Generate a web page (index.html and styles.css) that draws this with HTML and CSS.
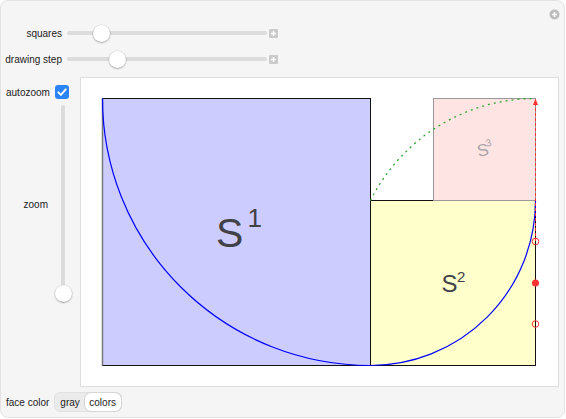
FILE: index.html
```html
<!DOCTYPE html>
<html>
<head>
<meta charset="utf-8">
<link rel="stylesheet" href="styles.css">
</head>
<body>
<div class="panel">
  <span class="corner-icon">
    <svg width="11" height="11" viewBox="0 0 11 11"><circle cx="5.5" cy="5.5" r="5" fill="#bcbcbc"/><path d="M5.5 3v5M3 5.5h5" stroke="#fff" stroke-width="1.6"/></svg>
  </span>

  <div class="slider-row">
    <span class="lbl">squares</span>
    <div class="track"><span class="thumb" style="left:26px"></span></div>
    <span class="plus"><svg width="9" height="9" viewBox="0 0 9 9"><rect width="9" height="9" rx="1" fill="#cbcbcb"/><path d="M4.5 2v5M2 4.5h5" stroke="#fff" stroke-width="1.3"/></svg></span>
  </div>
  <div class="slider-row second">
    <span class="lbl">drawing step</span>
    <div class="track"><span class="thumb" style="left:41.5px"></span></div>
    <span class="plus"><svg width="9" height="9" viewBox="0 0 9 9"><rect width="9" height="9" rx="1" fill="#cbcbcb"/><path d="M4.5 2v5M2 4.5h5" stroke="#fff" stroke-width="1.3"/></svg></span>
  </div>

  <div class="main">
    <div class="side">
      <div class="auto">
        <span>autozoom</span>
        <span class="check"><svg width="14" height="14" viewBox="0 0 14 14"><path d="M3.4 7.3l2.5 2.6 4.8-5.6" fill="none" stroke="#fff" stroke-width="1.9" stroke-linecap="round" stroke-linejoin="round"/></svg></span>
      </div>
      <div class="zoomrow">
        <span class="zoomlbl">zoom</span>
        <div class="vtrack"><span class="vthumb"></span></div>
      </div>
    </div>
    <div class="plot">
      <svg width="477" height="308" viewBox="81 78 477 308">
        <rect x="102.5" y="98.5" width="268" height="267" fill="#ccccff" stroke="#111" stroke-width="1"/>
        <line x1="102.5" y1="98.5" x2="102.5" y2="365.5" stroke="#777" stroke-width="1.5"/>
        <rect x="370.5" y="200.5" width="165" height="165" fill="#ffffcc" stroke="#111" stroke-width="1"/>
        <rect x="433.5" y="98.5" width="102" height="102" fill="#ffe4e4" stroke="#999" stroke-width="1"/>
        <path d="M370.5 200.5 A184.5 184.5 0 0 1 535.5 98.5" fill="none" stroke="#2fa52f" stroke-width="1.3" stroke-dasharray="2 4"/>
        <path d="M102.5 98.5 A268 267 0 0 0 370.5 365.5" fill="none" stroke="#0000ff" stroke-width="1.2"/>
        <path d="M370.5 365.5 A165 165 0 0 0 535.5 200.5" fill="none" stroke="#0000ff" stroke-width="1.2"/>
        <line x1="535.5" y1="241" x2="535.5" y2="104" stroke="#ff3333" stroke-width="1" stroke-dasharray="3 2"/>
        <path d="M535.5 98.5 L538 105 L533 105 Z" fill="#ff3333"/>
        <circle cx="535.5" cy="241.5" r="3.3" fill="none" stroke="#ff3333" stroke-width="1"/>
        <circle cx="535.5" cy="283" r="3.5" fill="#ff3333"/>
        <circle cx="535.5" cy="324" r="3.3" fill="none" stroke="#ff3333" stroke-width="1"/>
        <text class="lab" x="216" y="247" font-size="41">S</text>
        <text class="lab" x="247.5" y="227" font-size="26">1</text>
        <text class="lab" x="441.5" y="292" font-size="24">S</text>
        <text class="lab" x="457" y="282" font-size="15">2</text>
        <g transform="rotate(-12 485 149)">
          <text class="lab3" x="477" y="155.5" font-size="17">S</text>
          <text class="lab3" x="487" y="147" font-size="10">3</text>
        </g>
      </svg>
    </div>
  </div>

  <div class="face">
    <span class="facelbl">face color</span>
    <div class="seg">
      <span class="opt">gray</span>
      <span class="opt on">colors</span>
    </div>
  </div>
</div>
</body>
</html>
```
FILE: styles.css
```css
html, body {
  margin: 0;
  padding: 0;
  background: #ffffff;
}
body {
  font-family: "Liberation Sans", Arial, sans-serif;
  font-size: 10px;
  color: #222;
}
.panel {
  position: relative;
  width: 565px;
  height: 418px;
  box-sizing: border-box;
  border: 1px solid #e3e3e3;
  border-radius: 8px;
  background: #f5f5f5;
  padding-top: 20px;
}
.corner-icon {
  position: absolute;
  left: 548px;
  top: 8px;
  width: 11px;
  height: 11px;
}
.corner-icon svg { display: block; }
.slider-row {
  display: flex;
  align-items: center;
  height: 24px;
}
.slider-row.second { margin-top: 2px; }
.lbl {
  width: 61px;
  text-align: right;
  white-space: nowrap;
}
.track {
  position: relative;
  margin-left: 5px;
  width: 200px;
  height: 4px;
  border-radius: 2px;
  background: #dcdcdc;
}
.thumb {
  position: absolute;
  top: -6.5px;
  width: 17px;
  height: 17px;
  border-radius: 50%;
  background: #fff;
  box-shadow: 0 0 0 0.5px rgba(0,0,0,0.12), 0 1px 2px rgba(0,0,0,0.25);
}
.plus {
  margin-left: 2px;
  width: 9px;
  height: 9px;
}
.plus svg { display: block; }
.main {
  display: flex;
  margin-top: 6px;
  height: 310px;
}
.side {
  width: 79px;
  display: flex;
  flex-direction: column;
}
.auto {
  display: flex;
  align-items: center;
  gap: 5px;
  margin-top: 8px;
  padding-left: 5px;
  height: 14px;
}
.check {
  width: 14px;
  height: 14px;
  border-radius: 3px;
  background: #2a84f6;
}
.check svg { display: block; }
.zoomrow {
  display: flex;
  align-items: center;
  gap: 13px;
  margin-top: 6px;
  height: 198px;
}
.zoomlbl {
  width: 47px;
  text-align: right;
}
.vtrack {
  position: relative;
  width: 4px;
  height: 198px;
  border-radius: 2px;
  background: #dcdcdc;
}
.vthumb {
  position: absolute;
  left: -6.5px;
  top: 180px;
  width: 17px;
  height: 17px;
  border-radius: 50%;
  background: #fff;
  box-shadow: 0 0 0 0.5px rgba(0,0,0,0.12), 0 1px 2px rgba(0,0,0,0.25);
}
.plot {
  width: 479px;
  height: 310px;
  box-sizing: border-box;
  border: 1px solid #dddddd;
  background: #ffffff;
}
.plot svg { display: block; }
.lab {
  font-family: "Liberation Sans", Arial, sans-serif;
  fill: #414148;
}
.lab3 {
  font-family: "Liberation Sans", Arial, sans-serif;
  fill: #a9a3a6;
}
.face {
  display: flex;
  align-items: center;
  gap: 5px;
  margin-top: 5px;
  padding-left: 5px;
  height: 20px;
}
.seg {
  display: flex;
  align-items: stretch;
  height: 18px;
  border: 1px solid #e2e2e2;
  border-radius: 6px;
  background: #ebebeb;
}
.opt {
  display: flex;
  align-items: center;
  padding: 0 5px;
}
.opt.on {
  background: #fff;
  border-radius: 6px;
  box-shadow: 0 0 0 1px #d6d6d6;
  padding: 0 4.5px;
}
```
